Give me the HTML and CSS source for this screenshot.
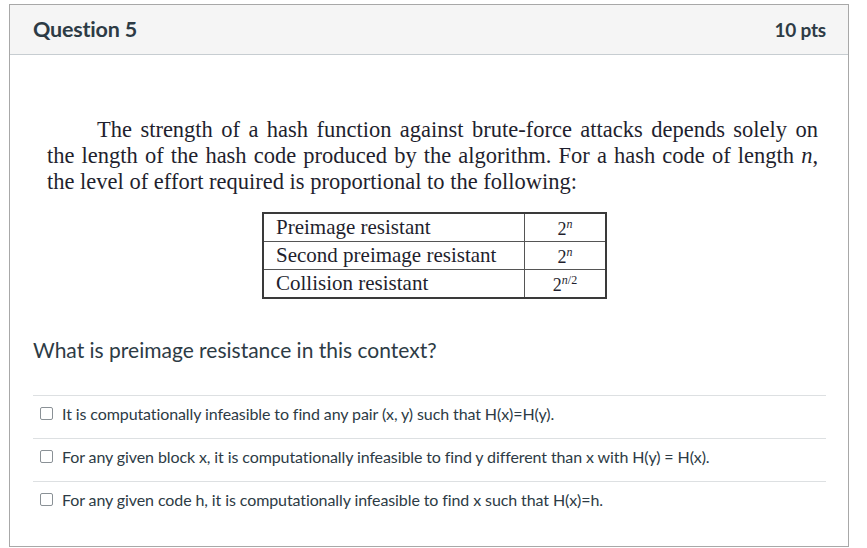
FILE: index.html
```html
<!DOCTYPE html>
<html>
<head>
<meta charset="utf-8">
<link rel="stylesheet" href="styles.css">
</head>
<body>
<div class="card">
  <div class="card-header">
    <span class="q-title">Question 5</span>
    <span class="q-pts">10 pts</span>
  </div>
  <div class="card-body">
    <div class="figure">
      <p class="book-text"><span class="line full indent">The strength of a hash function against brute-force attacks depends solely on</span><span class="line full">the length of the hash code produced by the algorithm. For a hash code of length <i>n</i>,</span><span class="line">the level of effort required is proportional to the following:</span></p>
      <table class="book-table">
        <tr><td class="name">Preimage resistant</td><td class="val">2<sup><i>n</i></sup></td></tr>
        <tr><td class="name">Second preimage resistant</td><td class="val">2<sup><i>n</i></sup></td></tr>
        <tr><td class="name">Collision resistant</td><td class="val">2<sup><i>n</i>/2</sup></td></tr>
      </table>
    </div>
    <div class="question">What is preimage resistance in this context?</div>
    <div class="answers">
      <label class="answer"><span class="box"></span><span class="answer-text">It is computationally infeasible to find any pair (x, y) such that H(x)=H(y).</span></label>
      <label class="answer"><span class="box"></span><span class="answer-text">For any given block x, it is computationally infeasible to find y different than x with H(y) = H(x).</span></label>
      <label class="answer"><span class="box"></span><span class="answer-text">For any given code h, it is computationally infeasible to find x such that H(x)=h.</span></label>
    </div>
  </div>
</div>
</body>
</html>
```
FILE: styles.css
```css
html, body {
  margin: 0;
  padding: 0;
  background: #ffffff;
}
body {
  padding: 4px 0 0 9px;
  font-family: Lato, "Liberation Sans", sans-serif;
  color: #2d3b45;
}
.card {
  width: 840px;
  height: 543px;
  box-sizing: border-box;
  border: 1px solid #a8a8a8;
  background: #fff;
}
.card-header {
  height: 50px;
  box-sizing: border-box;
  background: #f5f5f5;
  border-bottom: 1px solid #c7cdd1;
  display: flex;
  align-items: center;
  justify-content: space-between;
  padding: 0 22px 1px 23px;
}
.q-title {
  font-weight: 700;
  font-size: 21.5px;
  letter-spacing: -0.2px;
}
.q-pts {
  font-weight: 700;
  font-size: 19px;
  letter-spacing: -0.2px;
}
.card-body {
  padding: 0 22px 0 23px;
}
.figure {
  padding-top: 62px;
  padding-left: 14px;
}
.book-text {
  margin: 0;
  width: 771px;
  font-family: "Liberation Serif", serif;
  font-size: 22.5px;
  line-height: 26px;
  color: #1f1f2e;
}
.line {
  display: block;
  white-space: nowrap;
}
.line.full {
  text-align: justify;
  text-align-last: justify;
}
.line.indent {
  padding-left: 50px;
}
.book-table {
  margin: 17px 0 0 215px;
  border-collapse: collapse;
  font-family: "Liberation Serif", serif;
  font-size: 21px;
  color: #1f1f2e;
  border: 2px solid #3a3a3a;
}
.book-table td {
  border: 1px solid #555;
  height: 27px;
  padding: 0 0 0 12px;
  line-height: 1;
}
.book-table td.name {
  width: 248px;
}
.book-table td.val {
  width: 80px;
  padding: 0;
  text-align: center;
  font-size: 18px;
}
.book-table sup {
  font-size: 12px;
  vertical-align: 7px;
}
.question {
  margin-top: 38px;
  font-size: 21px;
  color: #2d3b45;
}
.answers {
  margin-top: 33px;
}
.answer {
  display: flex;
  align-items: center;
  height: 34px;
  padding: 0 0 8px 7px;
  border-top: 1px solid #dde0e2;
  font-size: 16px;
  letter-spacing: -0.1px;
  color: #2d3b45;
}
.box {
  width: 11px;
  height: 11px;
  border: 1px solid #8a9196;
  border-radius: 2px;
  margin-right: 9px;
  background: #fff;
}
```
